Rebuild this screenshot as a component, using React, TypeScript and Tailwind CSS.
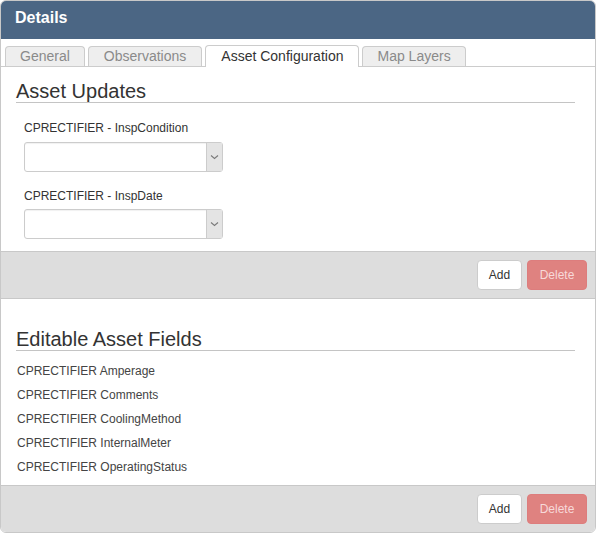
import React from 'react';

const tabs = [
  { label: 'General', pad: 'px-[14px]' },
  { label: 'Observations', pad: 'px-[15px]' },
  { label: 'Asset Configuration', pad: 'px-[15px]' },
  { label: 'Map Layers', pad: 'px-[14px]' },
];
const activeTab = 'Asset Configuration';

const editableFields = [
  'CPRECTIFIER Amperage',
  'CPRECTIFIER Comments',
  'CPRECTIFIER CoolingMethod',
  'CPRECTIFIER InternalMeter',
  'CPRECTIFIER OperatingStatus',
];

const SelectBox: React.FC = () => (
  <div className="flex h-[30px] w-[199px] rounded-[3px] border border-[#ccc] bg-white shadow-[inset_0_1px_1px_rgba(0,0,0,0.06)]">
    <div className="flex-1" />
    <div className="flex w-[16px] items-center justify-center border-l border-[#ccc] bg-[#e4e4e4]">
      <svg width="9" height="6" viewBox="0 0 9 6" fill="none">
        <path d="M1 1.5l3.5 3 3.5-3" stroke="#7a7a7a" strokeWidth="1.1" />
      </svg>
    </div>
  </div>
);

const Footer: React.FC = () => (
  <div className="flex justify-end gap-[5px] border-y border-[#c8c8c8] bg-[#dddddd] py-[8px] pr-[8px]">
    <button className="h-[30px] w-[45px] rounded-[4px] border border-[#ccc] bg-white text-[12px] text-[#333]">
      Add
    </button>
    <button className="h-[30px] w-[60px] rounded-[4px] border border-[#dd7d7d] bg-[#df8280] text-[12px] text-[#f7d9d9]">
      Delete
    </button>
  </div>
);

const SectionHeading: React.FC<{ title: string; className?: string }> = ({ title, className }) => (
  <h2
    className={`ml-[15px] mr-[20px] border-b border-[#c4c4c4] text-[20px] leading-[22px] text-[#333] ${className ?? ''}`}
  >
    {title}
  </h2>
);

const App: React.FC = () => {
  return (
    <div className="h-[533px] w-[596px] bg-white font-['Liberation_Sans',Arial,sans-serif]">
      <div className="flex h-full flex-col overflow-hidden rounded-[6px] border border-[#c8c8c8]">
        {/* Header */}
        <div className="flex h-[38px] shrink-0 items-center bg-[#4b6684] px-[14px] pb-[4px]">
          <span className="text-[16px] font-bold text-white">Details</span>
        </div>

        {/* Tabs */}
        <div className="flex h-[28px] shrink-0 items-end gap-[3px] border-b border-[#ccc] pl-[4px]">
          {tabs.map(tab =>
            tab.label === activeTab ? (
              <div
                key={tab.label}
                className={`-mb-px flex h-[22px] items-center rounded-t-[4px] border border-b-0 border-[#ccc] bg-white text-[14px] text-[#333] ${tab.pad}`}
              >
                {tab.label}
              </div>
            ) : (
              <div
                key={tab.label}
                className={`flex h-[20px] items-center rounded-t-[4px] border border-b-0 border-[#ccc] bg-[#eeeeee] text-[14px] text-[#8a8a8a] ${tab.pad}`}
              >
                {tab.label}
              </div>
            )
          )}
        </div>

        {/* Asset Updates */}
        <SectionHeading title="Asset Updates" className="mt-[13px]" />
        <div className="mb-[12px] ml-[23px] mt-[18px] flex flex-col">
          <label className="text-[12px] leading-[14px] text-[#333]">CPRECTIFIER - InspCondition</label>
          <div className="mt-[7px]">
            <SelectBox />
          </div>
          <label className="mt-[17px] text-[12px] leading-[14px] text-[#333]">CPRECTIFIER - InspDate</label>
          <div className="mt-[6px]">
            <SelectBox />
          </div>
        </div>
        <Footer />

        {/* Editable Asset Fields */}
        <SectionHeading title="Editable Asset Fields" className="mt-[29px]" />
        <ul className="mb-[6px] ml-[16px] mt-[8px] flex flex-col">
          {editableFields.map(field => (
            <li key={field} className="text-[12px] leading-[24px] text-[#444]">
              {field}
            </li>
          ))}
        </ul>
        <Footer />
      </div>
    </div>
  );
};

export default App;
